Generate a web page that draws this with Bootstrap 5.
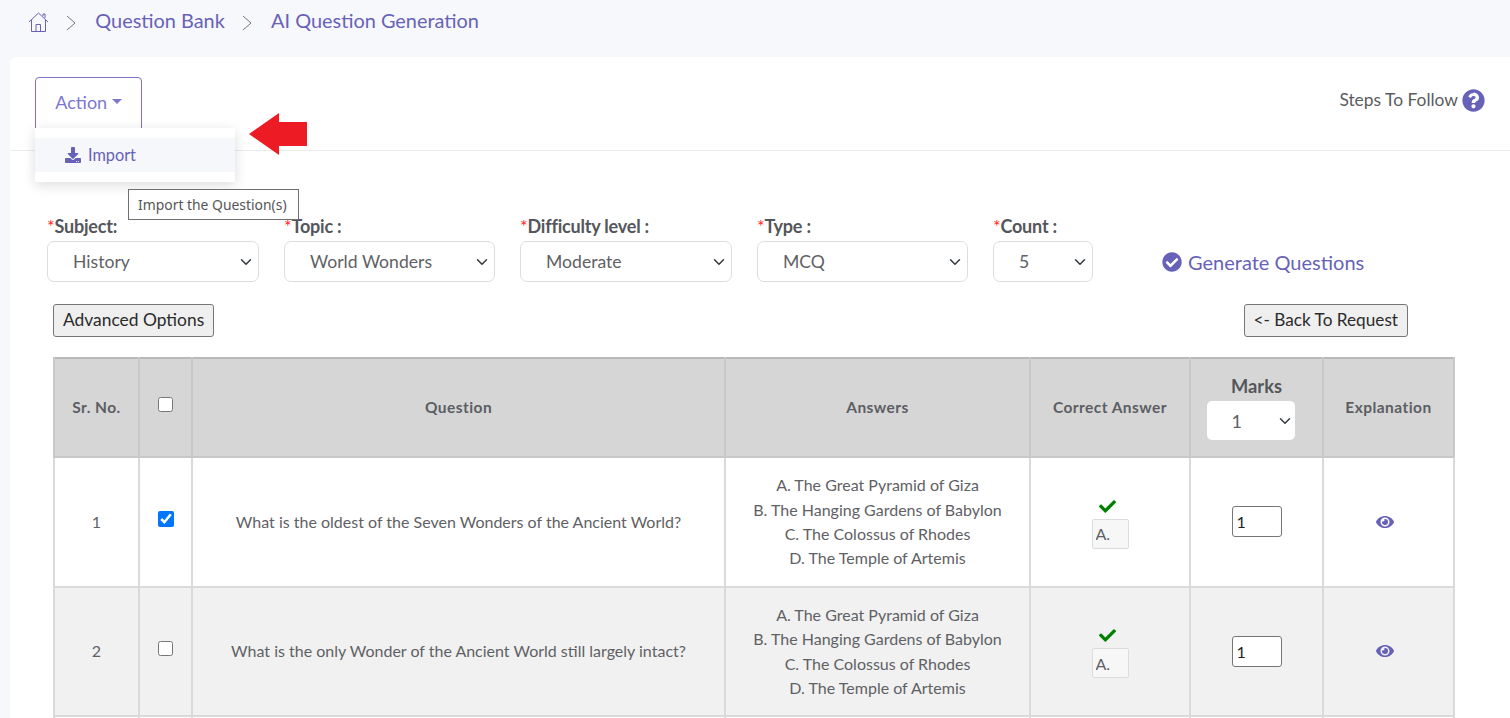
<!DOCTYPE html>
<html lang="en">
<head>
<meta charset="utf-8">
<title>AI Question Generation</title>
<link rel="stylesheet" href="https://cdn.jsdelivr.net/npm/bootstrap@5.3.0/dist/css/bootstrap.min.css">
<style>
html,body{height:718px;overflow:hidden}
body{background:#f7f8fb;font-family:"Lato",sans-serif;color:#5f6165;font-size:16px}
a{text-decoration:none}
.crumbs{height:57px;padding:6px 0 0 28px;color:#6762b8;font-size:19.9px;line-height:28px}
.crumbs .sep{margin:0 19.3px 0 17px;color:#777}
.crumbs .home-ico{margin-top:-1px}
.panel{background:#fff;margin-left:10px;border-radius:6px 0 0 0;height:661px;position:relative;overflow:hidden}
.panel-top{height:94px;border-bottom:1px solid #ececec;padding:20px 26px 0 25px}
.act-wrap{position:relative}
.act-btn{width:107px;height:52px;border:1px solid #7a72cc;border-radius:4px 4px 0 0;background:#fff;color:#7d77d0;font-size:18px;padding:0 0 2px}
.act-menu{position:absolute;left:0;top:51px;width:200px;height:54px;margin:0;padding:10px 0;border:0;border-radius:0;box-shadow:0 3px 12px rgba(0,0,0,.14);display:block;z-index:5}
.act-menu .dropdown-item{height:34px;padding:0 0 0 30px;background:#f6f7fa;color:#6762b8;font-size:16.3px;line-height:34px;display:flex;align-items:center;gap:7px}
.tip-box{position:absolute;left:118px;top:132px;width:171px;height:31px;background:#fff;border:1px solid #6f6f6f;font-family:"Noto Sans",sans-serif;font-size:13.9px;line-height:29px;padding-left:9px;color:#555;z-index:6;white-space:nowrap}
.red-arrow{position:absolute;left:239px;top:56px;z-index:6}
.steps{font-size:17.4px;color:#5a5c60;margin:10px -1px 0 0;gap:4px}
.filters{padding:63px 0 0 37px;gap:25px}
.fld label{display:block;font-size:18px;font-weight:700;line-height:24px;margin:0 0 3px;color:#54565b;letter-spacing:-.2px}
.fld label b{color:#f22;font-weight:400}
.fld .form-select{height:41px;font-size:17.6px;color:#5f6165;padding:2px 30px 0 25px;border-color:#ddd;border-radius:7px;font-family:"Lato",sans-serif;background-position:right 4px center}
.w212{width:212px}.w211{width:211px}.w100{width:100px}
.gen{color:#6762b8;font-size:20px;margin:27px 0 0 44px;height:41px;gap:6px}
.tools{margin:22px 0 0 43px;width:1355px}
.plain-btn{height:33px;background:#efefef;border:1px solid #767676;border-radius:3px;color:#2b2b2b;font-size:17.4px;padding:0 9px 3px;line-height:29px}
.plain-btn.back-btn{font-size:17.2px}
.qtable{margin:20px 0 0 43px;width:1400px;table-layout:fixed;border-collapse:collapse;border:2px solid #b9b9b9;text-align:center}
.qtable th,.qtable td{border:2px solid #dadada;vertical-align:middle;padding:0}
.qtable thead th{background:#d6d6d6;height:99px;font-size:15.5px;letter-spacing:.45px;font-weight:700;color:#5c5e63;border-color:#c8c8c8;border-top:0}
.qtable tbody tr.r1 td{background:#fff;height:130px}
.qtable tbody tr.r2 td{background:#f1f1f1;height:129px}
.qtable tbody tr.r2 td.lift{padding-bottom:1px}
.qtable tbody tr.r3 td{background:#fff;height:60px}
.qtable td{font-size:16px;color:#5f6165}
.ans{line-height:24.3px}
.mk-title{font-size:18.3px;letter-spacing:0;color:#54565b;line-height:24px;display:block;margin-top:-1px}
.mk-sel{width:88px;height:39px;border:0;border-radius:5px;font-size:18px;padding:2px 24px 0 25px;margin:3px 10px 0 -2px;color:#5f6165;font-family:"Lato",sans-serif;background-position:right 2px center;display:inline-block;letter-spacing:0}
.nat{width:15px;height:15px;display:block;margin:0 auto;position:relative;top:-3px}
.nat:checked{width:16px;height:16px}
.ro-ans{display:block;width:37px;height:30px;margin:0 auto;background:#f7f7f7;border:1px solid #dcdcdc;border-radius:2px;font-size:16px;padding:0 0 0 3px;color:#5f6165;font-family:"Lato",sans-serif}
.tick{display:block;margin:2px auto 4px;position:relative;left:-3px}
.mk-in{width:50px;height:31px;border:1px solid #767676;border-radius:3px;background:#fff;color:#222;font-size:16px;padding:0 0 0 4px;margin-bottom:1px;font-family:"Lato",sans-serif}
.eye-cell{padding-right:8px!important}
.eye-cell svg{margin-bottom:4px}
svg{fill:currentColor}
</style>
</head>
<body>
<nav class="crumbs d-flex align-items-start">
  <a href="#" class="d-block home-ico" aria-label="Home">
    <svg width="21" height="22" viewBox="0 0 21 22" style="fill:none;stroke:#6762b8;stroke-width:1"><path d="M1 11 10.5 2 20 11M3.5 9v11.5h14V9M8 20.5v-7h4.5v7M15 5V3h2v4"/></svg>
  </a>
  <span class="sep"><svg width="10" height="16" viewBox="0 0 10 16" style="fill:none;stroke:#777;stroke-width:1"><path d="M1 1l8 7-8 7"/></svg></span>
  <a href="#" style="color:inherit">Question Bank</a>
  <span class="sep"><svg width="10" height="16" viewBox="0 0 10 16" style="fill:none;stroke:#777;stroke-width:1"><path d="M1 1l8 7-8 7"/></svg></span>
  <a href="#" style="color:inherit">AI Question Generation</a>
</nav>
<main class="panel">
  <div class="panel-top d-flex justify-content-between align-items-start">
    <div class="act-wrap">
      <button class="act-btn dropdown-toggle" type="button">Action</button>
      <ul class="dropdown-menu act-menu">
        <li><a class="dropdown-item" href="#"><svg width="16" height="16" viewBox="0 0 512 512"><path d="M216 0h80c13.3 0 24 10.7 24 24v168h87.7c17.8 0 26.7 21.5 14.1 34.1L269.7 378.3c-7.5 7.5-19.8 7.5-27.3 0L90.1 226.1c-12.6-12.6-3.7-34.1 14.1-34.1H192V24c0-13.3 10.7-24 24-24zm296 376v112c0 13.3-10.7 24-24 24H24c-13.3 0-24-10.7-24-24V376c0-13.3 10.7-24 24-24h146.7l49 49c20.1 20.1 52.5 20.1 72.6 0l49-49H488c13.3 0 24 10.7 24 24zm-124 88c0-11-9-20-20-20s-20 9-20 20 9 20 20 20 20-9 20-20zm64 0c0-11-9-20-20-20s-20 9-20 20 9 20 20 20 20-9 20-20z"/></svg>Import</a></li>
      </ul>
    </div>
    <div class="steps d-flex align-items-center">Steps To Follow
      <svg width="23" height="23" viewBox="0 0 512 512" style="color:#6762b8"><path d="M504 256c0 136.997-111.043 248-248 248S8 392.997 8 256C8 119.083 119.043 8 256 8s248 111.083 248 248zM262.655 90c-54.497 0-89.255 22.957-116.549 63.758-3.536 5.286-2.353 12.415 2.715 16.258l34.699 26.31c5.205 3.947 12.621 3.008 16.665-2.122 17.864-22.658 30.113-35.797 57.303-35.797 20.429 0 45.698 13.148 45.698 32.958 0 14.976-12.363 22.667-32.534 33.976C247.128 238.528 216 254.941 216 296v4c0 6.627 5.373 12 12 12h56c6.627 0 12-5.373 12-12v-1.333c0-28.462 83.186-29.647 83.186-106.667 0-58.002-60.165-111.999-116.531-111.999zM256 338c-25.365 0-46 20.635-46 46 0 25.364 20.635 46 46 46s46-20.636 46-46c0-25.365-20.635-46-46-46z"/></svg>
    </div>
  </div>
  <div class="tip-box">Import the Question(s)</div>
  <svg class="red-arrow" width="58" height="42" viewBox="0 0 58 42" style="color:#ed1c24"><path d="M0 21 30 0v9h28v24H30v9z"/></svg>

  <div class="filters d-flex align-items-start">
    <div class="fld w212"><label><b>*</b>Subject:</label><select class="form-select"><option>History</option></select></div>
    <div class="fld w211"><label><b>*</b>Topic :</label><select class="form-select"><option>World Wonders</option></select></div>
    <div class="fld w212"><label><b>*</b>Difficulty level :</label><select class="form-select"><option>Moderate</option></select></div>
    <div class="fld w211"><label><b>*</b>Type :</label><select class="form-select"><option>MCQ</option></select></div>
    <div class="fld w100"><label><b>*</b>Count :</label><select class="form-select"><option>5</option></select></div>
    <a href="#" class="gen d-flex align-items-center">
      <svg width="20" height="20" viewBox="0 0 512 512"><path d="M504 256c0 136.967-111.033 248-248 248S8 392.967 8 256 119.033 8 256 8s248 111.033 248 248zM227.314 387.314l184-184c6.248-6.248 6.248-16.379 0-22.627l-22.627-22.627c-6.248-6.249-16.379-6.249-22.628 0L216 308.118l-70.059-70.059c-6.248-6.248-16.379-6.248-22.628 0l-22.627 22.627c-6.248 6.248-6.248 16.379 0 22.627l104 104c6.249 6.249 16.379 6.249 22.628.001z"/></svg>Generate Questions</a>
  </div>

  <div class="tools d-flex justify-content-between">
    <button class="plain-btn" type="button">Advanced Options</button>
    <button class="plain-btn back-btn" type="button">&lt;- Back To Request</button>
  </div>

  <table class="qtable">
    <colgroup><col style="width:85px"><col style="width:53px"><col style="width:533px"><col style="width:305px"><col style="width:160px"><col style="width:133px"><col style="width:131px"></colgroup>
    <thead>
      <tr>
        <th>Sr. No.</th>
        <th><input type="checkbox" class="nat" aria-label="Select all"></th>
        <th>Question</th>
        <th>Answers</th>
        <th>Correct Answer</th>
        <th><span class="mk-title">Marks</span><select class="form-select mk-sel" aria-label="Marks"><option>1</option></select></th>
        <th>Explanation</th>
      </tr>
    </thead>
    <tbody>
      <tr class="r1">
        <td>1</td>
        <td><input type="checkbox" class="nat" checked aria-label="Select 1"></td>
        <td>What is the oldest of the Seven Wonders of the Ancient World?</td>
        <td class="ans">A. The Great Pyramid of Giza<br>B. The Hanging Gardens of Babylon<br>C. The Colossus of Rhodes<br>D. The Temple of Artemis</td>
        <td>
          <svg class="tick" width="17" height="17" viewBox="0 0 512 512" style="color:#008000"><path d="M173.898 439.404l-166.4-166.4c-9.997-9.997-9.997-26.206 0-36.204l36.203-36.204c9.997-9.998 26.207-9.998 36.204 0L192 312.69 432.095 72.596c9.997-9.997 26.207-9.997 36.204 0l36.203 36.204c9.997 9.997 9.997 26.206 0 36.204l-294.4 294.401c-9.998 9.997-26.207 9.997-36.204-.001z"/></svg>
          <input class="ro-ans" value="A." readonly aria-label="Correct answer">
        </td>
        <td><input class="mk-in" type="text" value="1" aria-label="Marks"></td>
        <td class="eye-cell"><svg width="18" height="16" viewBox="0 0 576 512" style="color:#6762b8"><path d="M572.52 241.4C518.29 135.59 410.93 64 288 64S57.68 135.64 3.48 241.41a32.35 32.35 0 0 0 0 29.19C57.71 376.41 165.07 448 288 448s230.32-71.64 284.52-177.41a32.35 32.35 0 0 0 0-29.19zM288 400a144 144 0 1 1 144-144 143.93 143.93 0 0 1-144 144zm0-240a95.31 95.31 0 0 0-25.31 3.79 47.85 47.85 0 0 1-66.9 66.9A95.78 95.78 0 1 0 288 160z"/></svg></td>
      </tr>
      <tr class="r2">
        <td class="lift">2</td>
        <td><input type="checkbox" class="nat" aria-label="Select 2"></td>
        <td class="lift">What is the only Wonder of the Ancient World still largely intact?</td>
        <td class="ans">A. The Great Pyramid of Giza<br>B. The Hanging Gardens of Babylon<br>C. The Colossus of Rhodes<br>D. The Temple of Artemis</td>
        <td>
          <svg class="tick" width="17" height="17" viewBox="0 0 512 512" style="color:#008000"><path d="M173.898 439.404l-166.4-166.4c-9.997-9.997-9.997-26.206 0-36.204l36.203-36.204c9.997-9.998 26.207-9.998 36.204 0L192 312.69 432.095 72.596c9.997-9.997 26.207-9.997 36.204 0l36.203 36.204c9.997 9.997 9.997 26.206 0 36.204l-294.4 294.401c-9.998 9.997-26.207 9.997-36.204-.001z"/></svg>
          <input class="ro-ans" value="A." readonly aria-label="Correct answer">
        </td>
        <td><input class="mk-in" type="text" value="1" aria-label="Marks"></td>
        <td class="eye-cell lift"><svg width="18" height="16" viewBox="0 0 576 512" style="color:#6762b8"><path d="M572.52 241.4C518.29 135.59 410.93 64 288 64S57.68 135.64 3.48 241.41a32.35 32.35 0 0 0 0 29.19C57.71 376.41 165.07 448 288 448s230.32-71.64 284.52-177.41a32.35 32.35 0 0 0 0-29.19zM288 400a144 144 0 1 1 144-144 143.93 143.93 0 0 1-144 144zm0-240a95.31 95.31 0 0 0-25.31 3.79 47.85 47.85 0 0 1-66.9 66.9A95.78 95.78 0 1 0 288 160z"/></svg></td>
      </tr>
      <tr class="r3"><td></td><td></td><td></td><td></td><td></td><td></td><td></td></tr>
    </tbody>
  </table>
</main>
<script src="https://cdn.jsdelivr.net/npm/bootstrap@5.3.0/dist/js/bootstrap.bundle.min.js"></script>
</body>
</html>
